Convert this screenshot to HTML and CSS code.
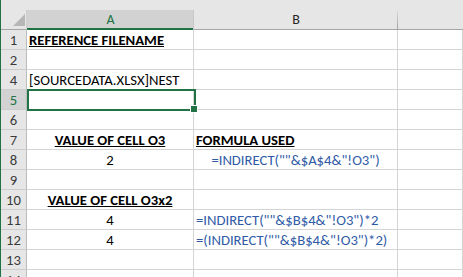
FILE: index.html
```html
<!DOCTYPE html>
<html lang="en">
<head>
    <meta charset="UTF-8">
    <meta name="viewport" content="width=device-width, initial-scale=1.0">
    <title>Sheet1</title>
    <link rel="stylesheet" href="styles.css">
</head>
<body>
    <div class="sheet">
        <div class="band"></div>
        <div class="grid">
            <!-- column headers -->
            <div class="hd corner">
                <svg width="12" height="12" viewBox="0 0 12 12"><polygon points="0,12 12,0 12,12" fill="#b6b6b6"/></svg>
            </div>
            <div class="hd sel">A</div>
            <div class="hd">B</div>
            <div class="hd last"></div>

            <div class="rh">1</div>
            <div class="c b">REFERENCE FILENAME</div>
            <div class="c"></div>
            <div class="c"></div>

            <div class="rh">2</div>
            <div class="c"></div>
            <div class="c"></div>
            <div class="c"></div>

            <!-- row 3 is hidden -->
            <div class="rh">4</div>
            <div class="c">[SOURCEDATA.XLSX]NEST</div>
            <div class="c"></div>
            <div class="c"></div>

            <div class="rh sel">5</div>
            <div class="c"></div>
            <div class="c"></div>
            <div class="c"></div>

            <div class="rh">6</div>
            <div class="c"></div>
            <div class="c"></div>
            <div class="c"></div>

            <div class="rh">7</div>
            <div class="c b ctr">VALUE OF CELL O3</div>
            <div class="c b">FORMULA USED</div>
            <div class="c"></div>

            <div class="rh">8</div>
            <div class="c ctr">2</div>
            <div class="c ctr f">=INDIRECT(""&amp;$A$4&amp;"!O3")</div>
            <div class="c"></div>

            <div class="rh">9</div>
            <div class="c"></div>
            <div class="c"></div>
            <div class="c"></div>

            <div class="rh">10</div>
            <div class="c b ctr">VALUE OF CELL O3x2</div>
            <div class="c"></div>
            <div class="c"></div>

            <div class="rh">11</div>
            <div class="c ctr">4</div>
            <div class="c f">=INDIRECT(""&amp;$B$4&amp;"!O3")*2</div>
            <div class="c"></div>

            <div class="rh">12</div>
            <div class="c ctr">4</div>
            <div class="c f">=(INDIRECT(""&amp;$B$4&amp;"!O3")*2)</div>
            <div class="c"></div>

            <div class="rh">13</div>
            <div class="c"></div>
            <div class="c"></div>
            <div class="c"></div>

            <div class="rh">14</div>
            <div class="c"></div>
            <div class="c"></div>
            <div class="c"></div>
        </div>

        <!-- active cell A5 -->
        <div class="selection"><div class="handle"></div></div>
    </div>
</body>
</html>
```
FILE: styles.css
```css
* {
    box-sizing: border-box;
}
body {
    margin: 0;
    font-family: Carlito, "Liberation Sans", sans-serif;
    font-size: 14.67px;
    color: #000;
    overflow: hidden;
}
.sheet {
    position: relative;
    height: 277px;
    border-left: 1px solid #217346;
    background: #fff;
    overflow: hidden;
}
.band {
    height: 10px;
    background: #e6e6e6;
}
.grid {
    display: grid;
    grid-template-columns: 26px 167px 204px 1fr;
    grid-auto-rows: 20px;
}

/* column headers */
.hd {
    position: relative;
    background: #e6e6e6;
    border-bottom: 1px solid #a5a5a5;
    font-size: 14px;
    line-height: 19px;
    text-align: center;
    color: #262626;
}
.hd::after {
    content: "";
    position: absolute;
    top: 0;
    right: 0;
    bottom: -1px;
    width: 1px;
    background: linear-gradient(#dcdcdc, #9e9e9e);
}
.hd.sel {
    background: #d2d2d2;
    border-bottom: 2px solid #217346;
    color: #217346;
}
.hd.sel::after {
    background: #c6c6c6;
    bottom: -2px;
}
.hd.last::after {
    display: none;
}
.corner {
    display: flex;
    justify-content: flex-end;
    align-items: flex-end;
    padding: 0 2px 3px 0;
}
.corner::after {
    background: #cfcfcf;
}

/* row headers */
.rh {
    background: #e6e6e6;
    border-right: 1px solid #bcbcbc;
    border-bottom: 1px solid #cdcdcd;
    padding-top: 1px;
    line-height: 18px;
    text-align: center;
    color: #3a3a3a;
}
.rh.sel {
    background: #d2d2d2;
    color: #217346;
}

/* cells */
.c {
    border-right: 1px solid #d4d4d4;
    border-bottom: 1px solid #d4d4d4;
    padding: 1px 2px 0;
    line-height: 18px;
    white-space: nowrap;
}
.b {
    font-weight: bold;
    text-decoration: underline;
}
.ctr {
    text-align: center;
}
.f {
    color: #2f5aa6;
}

/* active cell outline */
.selection {
    position: absolute;
    left: 26px;
    top: 89px;
    width: 169px;
    height: 22px;
    border: 2px solid #217346;
}
.handle {
    position: absolute;
    left: 161px;
    top: 14px;
    width: 8px;
    height: 8px;
    background: #217346;
    border: 1px solid #fff;
}
```
